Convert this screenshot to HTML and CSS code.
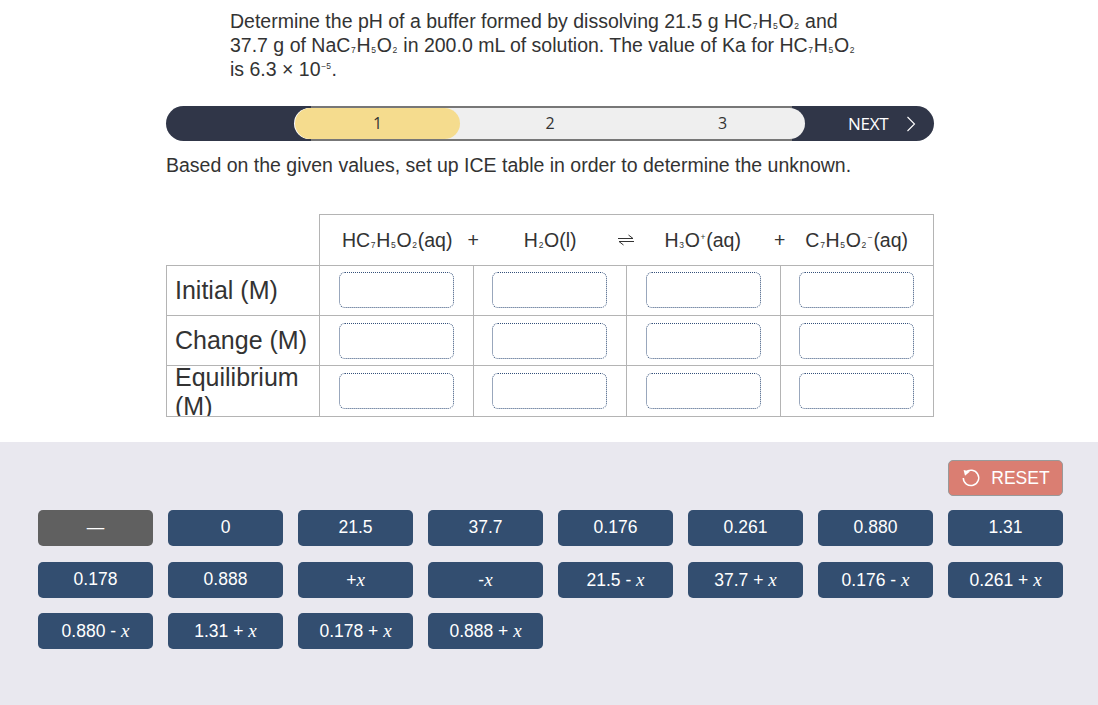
FILE: index.html
```html
<!DOCTYPE html>
<html lang="en">
<head>
  <meta charset="UTF-8">
  <title>ICE table</title>
  <link rel="stylesheet" href="styles.css">
</head>
<body>
  <div class="content">
    <p class="question">Determine the pH of a buffer formed by dissolving 21.5 g HC<sub>7</sub>H<sub>5</sub>O<sub>2</sub> and 37.7 g of NaC<sub>7</sub>H<sub>5</sub>O<sub>2</sub> in 200.0 mL of solution. The value of Ka for HC<sub>7</sub>H<sub>5</sub>O<sub>2</sub> is 6.3 × 10<sup>−5</sup>.</p>

    <div class="stepper">
      <div class="steps">
        <div class="step step-active">1</div>
        <div class="step step-middle">2</div>
        <div class="step">3</div>
      </div>
      <div class="next">
        <span>NEXT</span>
        <svg width="10" height="16" viewBox="0 0 10 16"><path d="M1.5 1 L8.5 8 L1.5 15" fill="none" stroke="#fff" stroke-width="1.1"/></svg>
      </div>
    </div>

    <p class="instruction">Based on the given values, set up ICE table in order to determine the unknown.</p>

    <table class="ice-table">
      <tr class="head-row">
        <th class="corner"></th>
        <th colspan="4">
          <div class="equation">
            <span class="eq-a">HC<sub>7</sub>H<sub>5</sub>O<sub>2</sub>(aq)</span>
            <span class="eq-plus-a">+</span>
            <span class="eq-b">H<sub>2</sub>O(l)</span>
            <svg class="eq-arrow" width="16" height="12" viewBox="0 0 16 12"><path d="M0 4.5 H15 L10.5 1 M16 7.5 H1 L5.5 11" fill="none" stroke="#333" stroke-width="1"/></svg>
            <span class="eq-c">H<sub>3</sub>O<sup>+</sup>(aq)</span>
            <span class="eq-plus-b">+</span>
            <span class="eq-d">C<sub>7</sub>H<sub>5</sub>O<sub>2</sub><sup>−</sup>(aq)</span>
          </div>
        </th>
      </tr>
      <tr>
        <td class="row-label"><div class="label-clip">Initial (M)</div></td>
        <td><div class="blank"></div></td>
        <td><div class="blank"></div></td>
        <td><div class="blank"></div></td>
        <td><div class="blank"></div></td>
      </tr>
      <tr>
        <td class="row-label"><div class="label-clip">Change (M)</div></td>
        <td><div class="blank"></div></td>
        <td><div class="blank"></div></td>
        <td><div class="blank"></div></td>
        <td><div class="blank"></div></td>
      </tr>
      <tr>
        <td class="row-label"><div class="label-clip label-wrap">Equilibrium (M)</div></td>
        <td><div class="blank"></div></td>
        <td><div class="blank"></div></td>
        <td><div class="blank"></div></td>
        <td><div class="blank"></div></td>
      </tr>
    </table>
  </div>

  <div class="tray">
    <div class="tray-top">
      <button class="reset">
        <svg width="20" height="20" viewBox="0 0 20 20"><path d="M4.6 4.4 A7.7 7.7 0 1 1 2.3 10" fill="none" stroke="#fff" stroke-width="1.5"/><path d="M2.6 2 L9 3.6 L4 7.8 Z" fill="#fff"/></svg>
        RESET
      </button>
    </div>
    <div class="tiles">
      <div class="tile tile-used">—</div>
      <div class="tile">0</div>
      <div class="tile">21.5</div>
      <div class="tile">37.7</div>
      <div class="tile">0.176</div>
      <div class="tile">0.261</div>
      <div class="tile">0.880</div>
      <div class="tile">1.31</div>
      <div class="tile">0.178</div>
      <div class="tile">0.888</div>
      <div class="tile">+<i>x</i></div>
      <div class="tile">-<i>x</i></div>
      <div class="tile">21.5 - <i>x</i></div>
      <div class="tile">37.7 + <i>x</i></div>
      <div class="tile">0.176 - <i>x</i></div>
      <div class="tile">0.261 + <i>x</i></div>
      <div class="tile">0.880 - <i>x</i></div>
      <div class="tile">1.31 + <i>x</i></div>
      <div class="tile">0.178 + <i>x</i></div>
      <div class="tile">0.888 + <i>x</i></div>
    </div>
  </div>
</body>
</html>
```

FILE: styles.css
```css
* {
  box-sizing: border-box;
}

body {
  margin: 0;
  font-family: "Liberation Sans", Arial, sans-serif;
  color: #333;
  background: #fff;
}

sub, sup {
  margin: 0 0.7px;
  font-size: 8.5px;
  line-height: 0;
}

sub {
  vertical-align: -1px;
}

sup {
  vertical-align: 7px;
}

.content {
  width: 768px;
  height: 442px;
  margin-left: 166px;
  padding-top: 9px;
}

.question {
  margin: 0 0 0 64px;
  width: 630px;
  font-size: 19.5px;
  line-height: 24px;
}

.stepper {
  display: flex;
  height: 35px;
  margin-top: 25px;
  padding: 2px 0;
  border-radius: 18px;
  background: linear-gradient(to right, #303648 0 145px, #777 145px 626px, #303648 626px);
}

.steps {
  display: flex;
  width: 510px;
  margin-left: 129px;
  border-radius: 16px;
  background: #efefef;
  font-family: "Open Sans", sans-serif;
  font-size: 16px;
}

.step {
  width: 165px;
  line-height: 31px;
  text-align: center;
}

.step-active {
  background: #f5dc8e;
  border-radius: 16px;
  box-shadow: -1px 0 0 #fff;
}

.step-middle {
  width: 180px;
}

.next {
  flex: 1;
  display: flex;
  align-items: center;
  gap: 18px;
  padding-left: 43px;
  color: #fff;
  font-family: "Open Sans", sans-serif;
  font-size: 17px;
  letter-spacing: -0.3px;
}

.instruction {
  margin: 12px 0 0;
  font-size: 19.5px;
  line-height: 24px;
}

.ice-table {
  width: 768px;
  margin-top: 37px;
  border-collapse: collapse;
  table-layout: fixed;
}

.ice-table th,
.ice-table td {
  border: 1px solid #b4b4b4;
  padding: 0;
  font-weight: normal;
}

.ice-table .corner {
  width: 153px;
  border-top: 0;
  border-left: 0;
}

.head-row {
  height: 51px;
}

.equation {
  display: flex;
  align-items: center;
  height: 50px;
  font-size: 19.5px;
}

.eq-a { margin-left: 22px; }
.eq-plus-a { margin-left: 15px; }
.eq-b { margin-left: 45px; }
.eq-arrow { margin-left: 41px; }
.eq-c { margin-left: 31px; }
.eq-plus-b { margin-left: 33px; }
.eq-d { margin-left: 20px; }

.ice-table .row-label {
  padding-left: 8px;
  font-size: 25px;
}

.label-clip {
  height: 49px;
  line-height: 49px;
  overflow: hidden;
}

.label-wrap {
  height: 53px;
  margin-top: -3px;
  line-height: 29px;
}

.blank {
  width: 115px;
  height: 36px;
  margin: -2px auto 0;
  border: 1px dotted #34507a;
  border-radius: 6px;
}

.ice-table tr + tr + tr .blank {
  margin-top: 0;
}

.tray {
  height: 263px;
  padding: 18px 35px 0 38px;
  background: #e9e8ef;
}

.tray-top {
  display: flex;
  justify-content: flex-end;
  height: 50px;
}

.reset {
  display: flex;
  align-items: center;
  justify-content: center;
  gap: 10px;
  width: 115px;
  height: 36px;
  padding: 0;
  border: 1px solid #999;
  border-radius: 5px;
  background: #da7e72;
  color: #fff;
  font-family: inherit;
  font-size: 17.5px;
}

.tiles {
  display: grid;
  grid-template-columns: repeat(8, 115px);
  column-gap: 15px;
  row-gap: 15.5px;
}

.tile {
  height: 36px;
  border-radius: 5px;
  background: #334e70;
  color: #fff;
  font-size: 17.5px;
  line-height: 35px;
  text-align: center;
}

.tile i {
  font-family: "Liberation Serif", serif;
  font-size: 19px;
}

.tile-used {
  background: #606060;
}
```
